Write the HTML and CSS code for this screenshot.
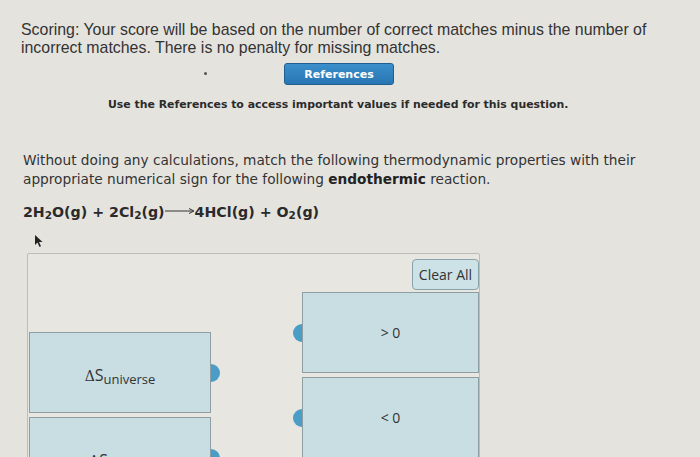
FILE: index.html
```html
<!DOCTYPE html>
<html>
<head>
<meta charset="utf-8">
<link rel="stylesheet" href="styles.css">
</head>
<body>
<div class="page">
  <p class="scoring">Scoring: Your score will be based on the number of correct matches minus the number of incorrect matches. There is no penalty for missing matches.</p>
  <div class="refs-row">
    <span class="dot"></span>
    <button class="refs-btn">References</button>
  </div>
  <p class="use-refs">Use the References to access important values if needed for this question.</p>

  <p class="question">Without doing any calculations, match the following thermodynamic properties with their appropriate numerical sign for the following <span class="strong">endothermic</span> reaction.</p>
  <p class="equation">2H<sub>2</sub>O(g) + 2Cl<sub>2</sub>(g)<svg class="arrow" width="30" height="8" viewBox="0 0 30 8"><path d="M0 4 H28" stroke="#333" stroke-width="1"/><path d="M24 1.5 L29 4 L24 6.5" fill="none" stroke="#333" stroke-width="1"/></svg>4HCl(g) + O<sub>2</sub>(g)</p>

  <div class="cursor-row">
    <svg class="cursor" width="10" height="14" viewBox="0 0 10 14"><path d="M1 1 L1 11 L3.5 8.5 L5.5 13 L7 12.3 L5 8 L8.5 8 Z" fill="#222"/></svg>
  </div>

  <div class="match-box">
    <div class="left-col">
      <div class="card card-left"><span class="sym"><span class="delta">Δ</span>S<sub>universe</sub></span><span class="tab tab-right"></span></div>
      <div class="card card-left"><span class="sym"><span class="delta">Δ</span>S<sub>system</sub></span><span class="tab tab-right"></span></div>
    </div>
    <div class="right-col">
      <button class="clear-btn">Clear All</button>
      <div class="card card-right"><span class="val">&gt; 0</span><span class="tab tab-left"></span></div>
      <div class="card card-right"><span class="val">&lt; 0</span><span class="tab tab-left"></span></div>
    </div>
  </div>
</div>
</body>
</html>
```
FILE: styles.css
```css
html, body {
  margin: 0;
  padding: 0;
  background: #e5e3de;
  height: 457px;
  overflow: hidden;
}
.page {
  padding: 0 0 0 21px;
  color: #2b2b2b;
}
.scoring {
  margin: 0;
  padding-top: 21px;
  width: 650px;
  font-family: "Liberation Sans", Arial, sans-serif;
  font-size: 15.9px;
  line-height: 18px;
  color: #333;
}
.refs-row {
  position: relative;
  margin-top: 6px;
  height: 23px;
  padding-left: 263px;
}
.dot {
  position: absolute;
  left: 183px;
  top: 9px;
  width: 3px;
  height: 3px;
  border-radius: 50%;
  background: #555;
}
.refs-btn {
  width: 110px;
  height: 22px;
  margin: 0;
  padding: 0;
  border: 1px solid #1f5f8f;
  border-radius: 3px;
  background: linear-gradient(#3b8fcb, #2776b3);
  color: #fff;
  font-family: "DejaVu Sans", sans-serif;
  font-weight: bold;
  font-size: 11px;
}
.use-refs {
  margin: 12px 0 0 87px;
  font-family: "DejaVu Sans", sans-serif;
  font-weight: bold;
  font-size: 10.9px;
  line-height: 14px;
  color: #2b2b2b;
}
.question {
  margin: 39px 0 0 2px;
  width: 640px;
  font-family: "DejaVu Sans", Verdana, sans-serif;
  font-size: 13.7px;
  line-height: 19px;
  color: #333;
}
.strong { font-weight: bold; color: #222; }
.equation {
  margin: 14px 0 0 2px;
  font-family: "DejaVu Sans", Verdana, sans-serif;
  font-weight: bold;
  font-size: 14.2px;
  line-height: 18px;
  color: #2a2a2a;
}
.equation sub {
  font-size: 10.5px;
  vertical-align: -2px;
  line-height: 0;
}
.arrow {
  display: inline-block;
  vertical-align: 2px;
}
.cursor-row {
  height: 32px;
  padding-left: 13px;
  padding-top: 13px;
  box-sizing: border-box;
}
.cursor { display: block; }
.match-box {
  margin-left: 6px;
  width: 453px;
  height: 240px;
  border: 1px solid #bdbcb7;
  border-radius: 2px;
  background: #e8e6e1;
  display: flex;
  justify-content: space-between;
  box-sizing: border-box;
}
.left-col {
  padding-top: 78px;
  padding-left: 1px;
  display: flex;
  flex-direction: column;
  gap: 4px;
}
.right-col {
  padding-top: 5px;
  padding-right: 0;
  display: flex;
  flex-direction: column;
  align-items: flex-end;
  gap: 2px;
}
.clear-btn {
  flex-shrink: 0;
  width: 67px;
  height: 31px;
  margin: 0;
  padding: 0;
  border: 1px solid #8aa3aa;
  border-radius: 4px;
  background: #cde2e7;
  color: #333;
  font-family: "Open Sans", sans-serif;
  font-size: 14px;
}
.card {
  position: relative;
  flex-shrink: 0;
  height: 81px;
  box-sizing: border-box;
  border: 1px solid #8e9ea2;
  background: #c9dee2;
  display: flex;
  align-items: center;
  justify-content: center;
  color: #333;
  font-family: "Open Sans", sans-serif;
}
.card-left { width: 182px; }
.card-right { width: 177px; }
.right-col .card + .card { margin-top: 2px; }
.sym {
  font-size: 16px;
  margin-top: 4px;
}
.delta {
  font-family: "DejaVu Serif", serif;
  font-size: 14px;
}
.sym sub {
  font-size: 13px;
  vertical-align: -3px;
  line-height: 0;
}
.val {
  font-size: 14px;
}
.tab {
  position: absolute;
  top: 50%;
  width: 9px;
  height: 18px;
  margin-top: -9px;
  background: #4a9dc6;
}
.tab-right {
  right: -10px;
  border-radius: 0 9px 9px 0;
}
.tab-left {
  left: -10px;
  border-radius: 9px 0 0 9px;
}
```
